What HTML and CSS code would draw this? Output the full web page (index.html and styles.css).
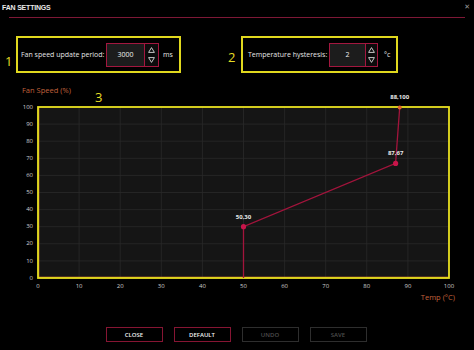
FILE: index.html
```html
<!DOCTYPE html>
<html lang="en">
<head>
<meta charset="utf-8">
<title>Fan Settings</title>
<link rel="stylesheet" href="styles.css">
</head>
<body>
<div class="window">
  <header class="titlebar">
    <span class="title">FAN SETTINGS</span>
    <span class="close">✕</span>
  </header>
  <div class="divider"></div>

  <section class="settings">
    <span class="marker m1">1</span>
    <div class="setting s1">
      <span class="label">Fan speed update period:</span>
      <div class="spin">
        <span class="value">3000</span>
        <span class="arrows">
          <svg class="arrow" viewBox="0 0 7 6" width="7" height="6"><polygon points="3.5,0.6 6.4,5.4 0.6,5.4"/></svg>
          <svg class="arrow" viewBox="0 0 7 6" width="7" height="6"><polygon points="0.6,0.6 6.4,0.6 3.5,5.4"/></svg>
        </span>
      </div>
      <span class="unit">ms</span>
    </div>
    <span class="marker m2">2</span>
    <div class="setting s2">
      <span class="label">Temperature hysteresis:</span>
      <div class="spin">
        <span class="value">2</span>
        <span class="arrows">
          <svg class="arrow" viewBox="0 0 7 6" width="7" height="6"><polygon points="3.5,0.6 6.4,5.4 0.6,5.4"/></svg>
          <svg class="arrow" viewBox="0 0 7 6" width="7" height="6"><polygon points="0.6,0.6 6.4,0.6 3.5,5.4"/></svg>
        </span>
      </div>
      <span class="unit">°c</span>
    </div>
  </section>

  <svg class="chart" viewBox="0 84 474 224" width="474" height="224">
    <text class="axis-title" x="22" y="94">Fan Speed (%)</text>
    <text class="marker-text" x="95" y="103">3</text>

    <rect class="plot-bg" x="38" y="108" width="411" height="171"/>
    <g class="grid">
      <line x1="79.1" y1="108" x2="79.1" y2="279"/>
      <line x1="120.2" y1="108" x2="120.2" y2="279"/>
      <line x1="161.3" y1="108" x2="161.3" y2="279"/>
      <line x1="202.4" y1="108" x2="202.4" y2="279"/>
      <line x1="243.5" y1="108" x2="243.5" y2="279"/>
      <line x1="284.6" y1="108" x2="284.6" y2="279"/>
      <line x1="325.7" y1="108" x2="325.7" y2="279"/>
      <line x1="366.8" y1="108" x2="366.8" y2="279"/>
      <line x1="407.9" y1="108" x2="407.9" y2="279"/>
      <line x1="38" y1="125.1" x2="449" y2="125.1"/>
      <line x1="38" y1="142.2" x2="449" y2="142.2"/>
      <line x1="38" y1="159.3" x2="449" y2="159.3"/>
      <line x1="38" y1="176.4" x2="449" y2="176.4"/>
      <line x1="38" y1="193.5" x2="449" y2="193.5"/>
      <line x1="38" y1="210.6" x2="449" y2="210.6"/>
      <line x1="38" y1="227.7" x2="449" y2="227.7"/>
      <line x1="38" y1="244.8" x2="449" y2="244.8"/>
      <line x1="38" y1="261.9" x2="449" y2="261.9"/>
    </g>

    <g class="yticks">
      <text x="33" y="108">100</text>
      <text x="33" y="125.1">90</text>
      <text x="33" y="142.2">80</text>
      <text x="33" y="159.3">70</text>
      <text x="33" y="176.4">60</text>
      <text x="33" y="193.5">50</text>
      <text x="33" y="210.6">40</text>
      <text x="33" y="227.7">30</text>
      <text x="33" y="244.8">20</text>
      <text x="33" y="261.9">10</text>
      <text x="33" y="279">0</text>
    </g>
    <g class="xticks">
      <text x="38" y="287">0</text>
      <text x="79.1" y="287">10</text>
      <text x="120.2" y="287">20</text>
      <text x="161.3" y="287">30</text>
      <text x="202.4" y="287">40</text>
      <text x="243.5" y="287">50</text>
      <text x="284.6" y="287">60</text>
      <text x="325.7" y="287">70</text>
      <text x="366.8" y="287">80</text>
      <text x="407.9" y="287">90</text>
      <text x="449" y="287">100</text>
    </g>

    <polyline class="axis-line" points="38.8,108 38.8,278.2 449,278.2"/>
    <rect class="plot-frame" x="38" y="108" width="411" height="171"/>

    <polyline class="curve" points="243.5,279 243.5,227.7 395.6,164.4 399.7,108.5"/>
    <circle class="pt" cx="243.5" cy="227.7" r="2.6"/>
    <circle class="pt" cx="395.6" cy="164.4" r="2.6"/>
    <circle class="pt top" cx="399.7" cy="108.5" r="2"/>
    <g class="pt-labels">
      <text x="243.5" y="219.5">50,30</text>
      <text x="395.6" y="156.2">87,67</text>
      <text x="399.7" y="99.5">88,100</text>
    </g>

    <text class="axis-title x-title" x="455" y="301">Temp (°C)</text>
  </svg>

  <footer class="buttons">
    <button class="btn active">CLOSE</button>
    <button class="btn active">DEFAULT</button>
    <button class="btn disabled">UNDO</button>
    <button class="btn disabled">SAVE</button>
  </footer>
</div>
</body>
</html>
```

FILE: styles.css
```css
* { box-sizing: border-box; }

html, body {
  margin: 0;
  padding: 0;
  background: #000;
}

body {
  font-family: "Open Sans", "Liberation Sans", sans-serif;
  color: #e6e6e6;
}

.window {
  width: 474px;
  height: 350px;
  background: #000;
  overflow: hidden;
}

.titlebar {
  height: 14px;
  display: flex;
  justify-content: space-between;
  align-items: center;
  padding: 0 4px 0 2px;
}

.title {
  font-family: "Liberation Sans", sans-serif;
  font-weight: bold;
  font-size: 7px;
  letter-spacing: -0.2px;
  color: #e8e8e8;
}

.close {
  font-family: "DejaVu Sans", sans-serif;
  font-size: 7px;
  color: #9a9a9a;
}

.divider {
  height: 1px;
  margin: 3px 9px 0 9px;
  background: #7e1836;
}

.settings {
  display: flex;
  align-items: center;
  margin-top: 18px;
  height: 37px;
  padding-left: 5px;
}

.marker {
  font-family: "Open Sans", sans-serif;
  font-size: 13px;
  line-height: 13px;
  color: #e4dc24;
}

.m1 { width: 11px; padding-top: 13px; }
.m2 { width: 13px; margin-left: 47px; padding-top: 6px; }

.setting {
  height: 37px;
  border: 2px solid #e0d81e;
  display: flex;
  align-items: center;
  padding-left: 3px;
}

.s1 { width: 165px; }
.s2 { width: 157px; padding-left: 5px; }

.label {
  font-size: 7px;
  color: #e6e6e6;
  white-space: nowrap;
}

.s1 .label { width: 85px; }
.s2 .label { width: 81px; }

.spin {
  height: 24px;
  display: flex;
  border: 1.5px solid #a3173f;
}

.s1 .spin { width: 53px; }
.s2 .spin { width: 49px; }

.value {
  flex: 1;
  background: #1c1c1c;
  border-right: 1.5px solid #a3173f;
  display: flex;
  align-items: center;
  justify-content: center;
  font-size: 7px;
  color: #f0f0f0;
}

.arrows {
  width: 13px;
  background: #0c0c0c;
  display: flex;
  flex-direction: column;
  align-items: center;
  justify-content: center;
  gap: 4px;
}

.s2 .arrows { width: 11px; }

.arrow polygon {
  fill: none;
  stroke: #dcdcdc;
  stroke-width: 0.9;
  stroke-linejoin: round;
}

.unit {
  font-size: 7px;
  color: #e6e6e6;
  margin-left: 4px;
}

.s2 .unit { margin-left: 6px; }

.chart {
  display: block;
  margin-top: 10px;
  font-family: "Open Sans", sans-serif;
}

.axis-title {
  font-size: 7.5px;
  fill: #c0603c;
}

.x-title { text-anchor: end; }

.marker-text {
  font-size: 13px;
  fill: #e4dc24;
}

.plot-bg { fill: #151515; }

.grid line {
  stroke: #2a2a2a;
  stroke-width: 0.8;
}

.yticks text,
.xticks text {
  font-size: 6px;
  fill: #cfcfcf;
  dominant-baseline: middle;
}

.yticks text { text-anchor: end; }
.xticks text { text-anchor: middle; }

.axis-line {
  fill: none;
  stroke: #d2722a;
  stroke-width: 1;
}

.plot-frame {
  fill: none;
  stroke: #e8e020;
  stroke-width: 1.8;
}

.curve {
  fill: none;
  stroke: #a3143c;
  stroke-width: 1.3;
}

.pt { fill: #c8154a; }
.pt.top { fill: #e0602c; }

.pt-labels text {
  font-size: 6px;
  font-weight: bold;
  fill: #e8e8e8;
  text-anchor: middle;
}

.buttons {
  display: flex;
  justify-content: center;
  gap: 11px;
  margin-top: 20px;
  padding-right: 2px;
}

.btn {
  width: 57px;
  height: 15px;
  padding: 0;
  background: #000;
  font-family: "Open Sans", sans-serif;
  font-size: 6px;
  font-weight: 600;
  border: 1.5px solid;
}

.btn.active {
  border-color: #861533;
  color: #f2f2f2;
}

.btn.disabled {
  border-color: #2e2e2e;
  color: #4e4e4e;
}
```
